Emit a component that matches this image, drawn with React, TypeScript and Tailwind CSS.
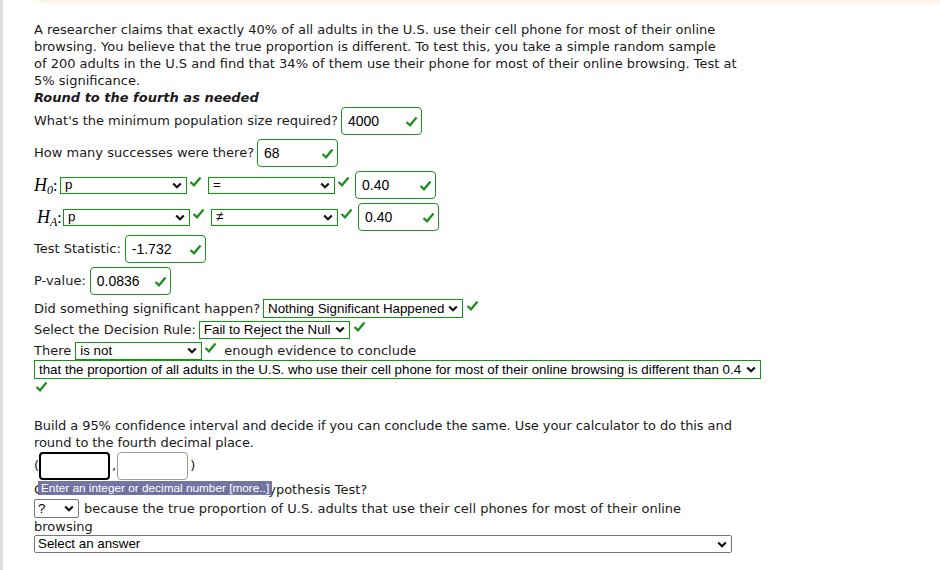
import React from 'react';

const body = "font-['DejaVu_Sans',sans-serif] text-[13px] text-[#1a1a1a]";
const arial = "font-['Liberation_Sans',Arial,sans-serif]";

function Check({ className = '' }: { className?: string }) {
  return (
    <svg width="13" height="11" viewBox="0 0 13 11" className={`shrink-0 ${className}`}>
      <path d="M1.5 6 L5 9.3 L11.5 1.5" fill="none" stroke="#1c8c1c" strokeWidth="2.2" />
    </svg>
  );
}

function Chevron() {
  return (
    <svg width="10" height="7" viewBox="0 0 10 7" className="shrink-0">
      <path d="M1.2 1.5 L5 5.2 L8.8 1.5" fill="none" stroke="#111" strokeWidth="2.2" />
    </svg>
  );
}

function AnswerBox({ value, className = '' }: { value: string; className?: string }) {
  return (
    <div
      className={`flex h-[28px] w-[81px] shrink-0 items-center justify-between rounded-[4px] border border-[#1f8f1f] pl-[6px] pr-[3px] ${arial} text-[14px] text-black ${className}`}
    >
      <span>{value}</span>
      <Check />
    </div>
  );
}

function GreenSelect({ value, className = '' }: { value: string; className?: string }) {
  return (
    <div
      className={`flex shrink-0 items-center justify-between gap-[4px] overflow-hidden border border-[#109a10] pl-[4px] pr-[4px] ${arial} text-[13.33px] leading-none text-black ${className}`}
    >
      <span className="whitespace-nowrap">{value}</span>
      <Chevron />
    </div>
  );
}

function Hyp({ sub }: { sub: string }) {
  return (
    <span className="flex w-[26px] items-baseline font-['Liberation_Serif',serif] text-black">
      <span className="text-[18px] italic">H</span>
      <span className="text-[12px] italic leading-none translate-y-[3px]">{sub}</span>
      <span className="text-[16px]">:</span>
    </span>
  );
}

export default function App() {
  return (
    <div className={`flex h-[570px] w-[940px] overflow-hidden bg-white ${body}`}>
      <div className="h-full w-[3px] bg-[#dcdcdc]" />
      <div className="flex-1 pl-[30px]">
        <div className="h-[3px] bg-[#fdf8e4]" />
        <div className="pl-[1px] pt-[18px]">
          <p className="leading-[17px]">
            A researcher claims that exactly 40% of all adults in the U.S. use their cell phone for most of their online
            <br />
            browsing. You believe that the true proportion is different. To test this, you take a simple random sample
            <br />
            of 200 adults in the U.S and find that 34% of them use their phone for most of their online browsing. Test at
            <br />
            5% significance.
          </p>
          <p className="font-bold italic leading-[17px]">Round to the fourth as needed</p>

          <div className="mt-[1px] flex flex-col gap-[4px]">
            <div className="flex h-[28px] items-center gap-[3px]">
              <span>What's the minimum population size required?</span>
              <AnswerBox value="4000" />
            </div>
            <div className="flex h-[28px] items-center gap-[3px]">
              <span>How many successes were there?</span>
              <AnswerBox value="68" />
            </div>
            <div className="flex h-[28px] items-center">
              <Hyp sub="0" />
              <GreenSelect value="p" className="h-[17px] w-[127px]" />
              <Check className="ml-[2px] -translate-y-[4px]" />
              <GreenSelect value="=" className="ml-[6px] h-[17px] w-[127px]" />
              <Check className="ml-[2px] -translate-y-[4px]" />
              <AnswerBox value="0.40" className="ml-[5px]" />
            </div>
            <div className="flex h-[28px] items-center">
              <span className="w-[3px]" />
              <Hyp sub="A" />
              <GreenSelect value="p" className="h-[17px] w-[127px]" />
              <Check className="ml-[2px] -translate-y-[4px]" />
              <GreenSelect value="≠" className="ml-[6px] h-[17px] w-[127px]" />
              <Check className="ml-[2px] -translate-y-[4px]" />
              <AnswerBox value="0.40" className="ml-[5px]" />
            </div>
            <div className="flex h-[28px] items-center gap-[4px]">
              <span>Test Statistic:</span>
              <AnswerBox value="-1.732" />
            </div>
            <div className="flex h-[28px] items-center gap-[4px]">
              <span>P-value:</span>
              <AnswerBox value="0.0836" />
            </div>
          </div>

          <div className="mt-[4px] flex h-[19px] items-center gap-[3px]">
            <span>Did something significant happen?</span>
            <GreenSelect value="Nothing Significant Happened" className="h-[19px] w-[200px]" />
            <Check className="-translate-y-[3px]" />
          </div>
          <div className="mt-[2px] flex h-[19px] items-center gap-[3px]">
            <span>Select the Decision Rule:</span>
            <GreenSelect value="Fail to Reject the Null" className="h-[18px] w-[151px]" />
            <Check className="-translate-y-[3px]" />
          </div>
          <div className="mt-[2px] flex h-[19px] items-center">
            <span>There</span>
            <GreenSelect value="is not" className="ml-[4px] h-[18px] w-[127px]" />
            <Check className="ml-[2px] -translate-y-[3px]" />
            <span className="ml-[7px]">enough evidence to conclude</span>
          </div>
          <GreenSelect
            value="that the proportion of all adults in the U.S. who use their cell phone for most of their online browsing is different than 0.4"
            className="h-[19px] w-[727px]"
          />
          <div className="flex h-[15px] items-center pl-[1px]">
            <Check />
          </div>

          <p className="mt-[23px] leading-[17px] tracking-[-0.08px]">
            Build a 95% confidence interval and decide if you can conclude the same. Use your calculator to do this and
            <br />
            round to the fourth decimal place.
          </p>

          <div className="relative">
            <div className="flex h-[30px] items-center">
              <span className="text-[#1a1a1a]">(</span>
              <div className="h-[28px] w-[71px] rounded-[4px] border-2 border-black" />
              <span className="ml-[2px] mr-[1px]">,</span>
              <div className="h-[28px] w-[71px] rounded-[4px] border border-[#9a9a9a]" />
              <span className="ml-[2px]">)</span>
            </div>
            <p className="leading-[17px]">Can we conclude the same as our Hypothesis Test?</p>
            <div
              className={`absolute left-[4px] top-[30px] bg-[#6e6e9f]/95 px-[3px] ${arial} text-[11.8px] leading-[14px] text-white`}
            >
              Enter an integer or decimal number [more..]
            </div>
          </div>

          <div className="mt-[1px] flex h-[19px] items-center gap-[5px]">
            <div
              className={`flex h-[19px] w-[45px] items-center justify-between rounded-[2px] border border-[#767676] pl-[3px] pr-[4px] ${arial} text-[13.33px] text-black`}
            >
              <span>?</span>
              <Chevron />
            </div>
            <span>because the true proportion of U.S. adults that use their cell phones for most of their online</span>
          </div>
          <p className="leading-[17px]">browsing</p>
          <div
            className={`flex h-[18px] w-[698px] items-center justify-between rounded-[2px] border border-[#767676] pl-[3px] pr-[4px] ${arial} text-[13.33px] text-black`}
          >
            <span>Select an answer</span>
            <Chevron />
          </div>
        </div>
      </div>
    </div>
  );
}
